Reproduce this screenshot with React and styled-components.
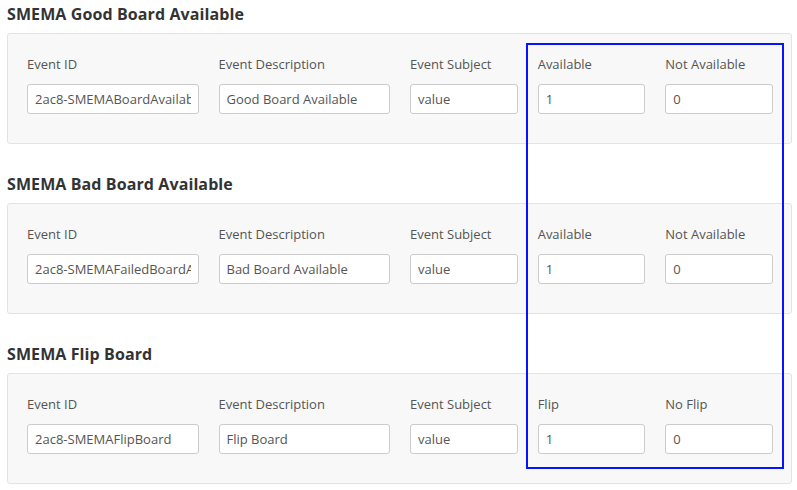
import React from "react";
import styled, { createGlobalStyle } from "styled-components";

const Global = createGlobalStyle`
  html, body { margin: 0; padding: 0; background: #fff; }
  body { font-family: "Open Sans", "Noto Sans", sans-serif; color: #333; }
  * { box-sizing: border-box; }
`;

const Page = styled.div`
  position: relative;
  padding: 3px 5px 0 7px;
`;

const Section = styled.section`
  margin-bottom: 29px;
`;

const Title = styled.h3`
  margin: 0 0 8px;
  font-size: 16px;
  line-height: 22px;
  font-weight: 700;
  letter-spacing: 0.1px;
  color: #333;
`;

const Well = styled.div`
  display: grid;
  grid-template-columns: 25% 25% 16.6667% 16.6667% 16.6667%;
  padding: 20px 8px 29px 9px;
  background: #f8f8f8;
  border: 1px solid #e3e3e3;
  border-radius: 3px;
`;

const Field = styled.div`
  display: flex;
  flex-direction: column;
  padding: 0 10px;
  min-width: 0;
`;

const Label = styled.label`
  font-size: 13px;
  line-height: 20px;
  color: #555;
  margin-bottom: 10px;
  white-space: nowrap;
`;

const Input = styled.input`
  width: 100%;
  height: 30px;
  padding: 0 7px;
  font-family: "Open Sans", "Noto Sans", sans-serif;
  font-size: 13px;
  color: #555;
  background: #fff;
  border: 1px solid #ccc;
  border-radius: 3px;
  outline: none;
`;

const Highlight = styled.div`
  position: absolute;
  left: 526px;
  top: 43px;
  width: 258px;
  height: 426px;
  border: 2px solid #0514ff;
  pointer-events: none;
`;

const sections = [
  {
    title: "SMEMA Good Board Available",
    id: "2ac8-SMEMABoardAvailable",
    desc: "Good Board Available",
    a: "Available",
    b: "Not Available",
  },
  {
    title: "SMEMA Bad Board Available",
    id: "2ac8-SMEMAFailedBoardAvailable",
    desc: "Bad Board Available",
    a: "Available",
    b: "Not Available",
  },
  {
    title: "SMEMA Flip Board",
    id: "2ac8-SMEMAFlipBoard",
    desc: "Flip Board",
    a: "Flip",
    b: "No Flip",
  },
];

export default function App() {
  return (
    <Page>
      <Global />
      {sections.map((s) => (
        <Section key={s.title}>
          <Title>{s.title}</Title>
          <Well>
            <Field>
              <Label>Event ID</Label>
              <Input readOnly value={s.id} />
            </Field>
            <Field>
              <Label>Event Description</Label>
              <Input readOnly value={s.desc} />
            </Field>
            <Field>
              <Label>Event Subject</Label>
              <Input readOnly value="value" />
            </Field>
            <Field>
              <Label>{s.a}</Label>
              <Input readOnly value="1" />
            </Field>
            <Field>
              <Label>{s.b}</Label>
              <Input readOnly value="0" />
            </Field>
          </Well>
        </Section>
      ))}
      <Highlight />
    </Page>
  );
}
